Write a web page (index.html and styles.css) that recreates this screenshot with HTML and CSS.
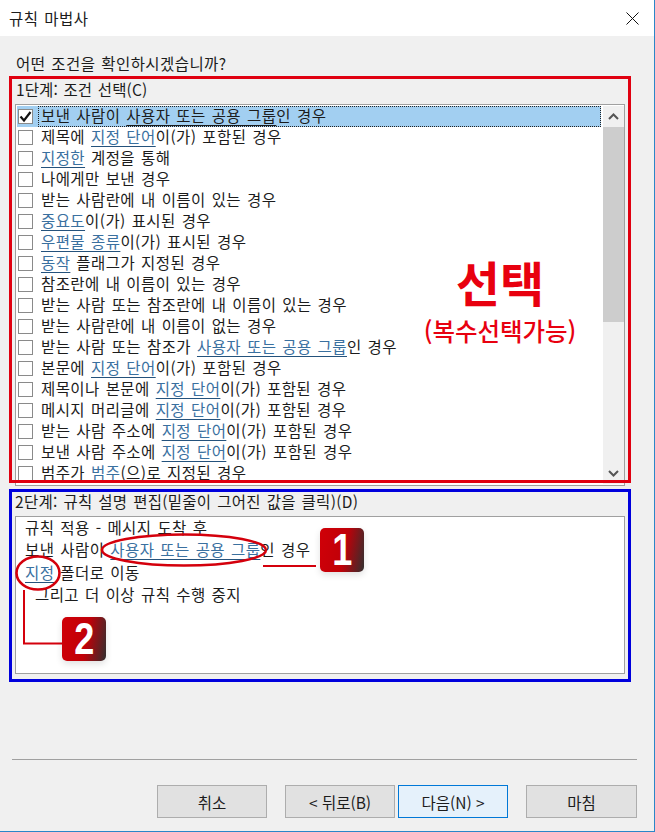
FILE: index.html
```html
<!DOCTYPE html>
<html lang="ko">
<head>
<meta charset="utf-8">
<title>규칙 마법사</title>
<link rel="stylesheet" href="styles.css">
</head>
<body>
<div class="window">
  <header class="titlebar">
    <span class="title">규칙 마법사</span>
    <svg class="close" width="13" height="13" viewBox="0 0 13 13"><path d="M.5 .5L12.500 12.500M12.500 .5L.5 12.500" stroke="#111" stroke-width="1" fill="none"/></svg>
  </header>
  <main class="content">
    <p class="question">어떤 조건을 확인하시겠습니까?</p>
    <h2 class="step step-one">1단계: 조건 선택(C)</h2>
    <div class="listbox">
      <ul class="rows">
        <li class="row selected"><span class="check checked"><svg width="13" height="13" viewBox="0 0 13 13"><path d="M1.5 6.5L5 10.5L11.5 2" stroke="#111" stroke-width="2.2" fill="none"/></svg></span><span class="label">보낸 사람이 <u>사용자 또는 공용 그룹</u>인 경우</span></li>
        <li class="row"><span class="check"></span><span class="label">제목에 <a>지정 단어</a>이(가) 포함된 경우</span></li>
        <li class="row"><span class="check"></span><span class="label"><a>지정한</a> 계정을 통해</span></li>
        <li class="row"><span class="check"></span><span class="label">나에게만 보낸 경우</span></li>
        <li class="row"><span class="check"></span><span class="label">받는 사람란에 내 이름이 있는 경우</span></li>
        <li class="row"><span class="check"></span><span class="label"><a>중요도</a>이(가) 표시된 경우</span></li>
        <li class="row"><span class="check"></span><span class="label"><a>우편물 종류</a>이(가) 표시된 경우</span></li>
        <li class="row"><span class="check"></span><span class="label"><a>동작</a> 플래그가 지정된 경우</span></li>
        <li class="row"><span class="check"></span><span class="label">참조란에 내 이름이 있는 경우</span></li>
        <li class="row"><span class="check"></span><span class="label">받는 사람 또는 참조란에 내 이름이 있는 경우</span></li>
        <li class="row"><span class="check"></span><span class="label">받는 사람란에 내 이름이 없는 경우</span></li>
        <li class="row"><span class="check"></span><span class="label">받는 사람 또는 참조가 <a>사용자 또는 공용 그룹</a>인 경우</span></li>
        <li class="row"><span class="check"></span><span class="label">본문에 <a>지정 단어</a>이(가) 포함된 경우</span></li>
        <li class="row"><span class="check"></span><span class="label">제목이나 본문에 <a>지정 단어</a>이(가) 포함된 경우</span></li>
        <li class="row"><span class="check"></span><span class="label">메시지 머리글에 <a>지정 단어</a>이(가) 포함된 경우</span></li>
        <li class="row"><span class="check"></span><span class="label">받는 사람 주소에 <a>지정 단어</a>이(가) 포함된 경우</span></li>
        <li class="row"><span class="check"></span><span class="label">보낸 사람 주소에 <a>지정 단어</a>이(가) 포함된 경우</span></li>
        <li class="row"><span class="check"></span><span class="label">범주가 <a>범주</a>(으)로 지정된 경우</span></li>
      </ul>
      <div class="scrollbar">
        <div class="arrow"><svg width="11" height="7" viewBox="0 0 11 7"><path d="M1 6L5.5 1.5L10 6" stroke="#555" stroke-width="2" fill="none"/></svg></div>
        <div class="thumb"></div>
        <div class="track"></div>
        <div class="arrow"><svg width="11" height="7" viewBox="0 0 11 7"><path d="M1 1L5.5 5.5L10 1" stroke="#555" stroke-width="2" fill="none"/></svg></div>
      </div>
    </div>
    <h2 class="step step-two">2단계: 규칙 설명 편집(밑줄이 그어진 값을 클릭)(D)</h2>
    <div class="description">
      <p>규칙 적용 - 메시지 도착 후</p>
      <p>보낸 사람이 <a>사용자 또는 공용 그룹</a>인 경우</p>
      <p><a>지정</a> 폴더로 이동</p>
      <p class="indent">그리고 더 이상 규칙 수행 중지</p>
    </div>
    <hr class="divider">
    <footer class="buttons">
      <button class="btn cancel">취소</button>
      <button class="btn back">&lt; 뒤로(B)</button>
      <button class="btn next">다음(N) &gt;</button>
      <button class="btn finish">마침</button>
    </footer>
  </main>

  <svg class="marks" width="655" height="832" viewBox="0 0 655 832">
    <rect x="10.5" y="77.5" width="619" height="404" fill="none" stroke="#e00010" stroke-width="3"/>
    <rect x="10.5" y="490.5" width="619" height="190" fill="none" stroke="#0000dd" stroke-width="3"/>
    <ellipse cx="184" cy="550" rx="82" ry="15.5" fill="none" stroke="#d4000c" stroke-width="2.600"/>
    <ellipse cx="38" cy="573" rx="21.5" ry="16.5" fill="none" stroke="#d4000c" stroke-width="2.600"/>
    <path d="M263 566H316M24 590V643.500H64" fill="none" stroke="#d4000c" stroke-width="2"/>
  </svg>
  <div class="badge badge-one"><span class="digit">1</span></div>
  <div class="badge badge-two"><span class="digit">2</span></div>
  <div class="callout">
    <div class="callout-main">선택</div>
    <div class="callout-sub">(복수선택가능)</div>
  </div>
</div>
</body>
</html>
```

FILE: styles.css
```css
* { box-sizing: border-box; }
html, body { margin: 0; padding: 0; }
body {
  font-family: "Noto Sans CJK KR", "Noto Sans", sans-serif;
  font-size: 15.5px;
  letter-spacing: .42px;
  word-spacing: 1.2px;
  color: #1c1c1c;
}
.window {
  position: relative;
  width: 655px;
  height: 832px;
  overflow: hidden;
  display: flex;
  flex-direction: column;
  background: #f0f0f0;
  border-right: 1px solid #2b86c8;
  border-bottom: 1px solid #2b86c8;
}
.titlebar {
  height: 36px;
  flex: none;
  background: #fff;
  display: flex;
  align-items: center;
  justify-content: space-between;
  padding: 0 15px 0 9px;
}
.title { line-height: 36px; }
.close { display: block; }
.content {
  flex: 1;
  display: flex;
  flex-direction: column;
  padding: 0 29px 0 15px;
}
.question {
  margin: 16px 0 0 1px;
  height: 22px;
  line-height: 22px;
}
.step {
  margin: 0 0 0 1px;
  font: inherit;
  height: 22px;
  line-height: 22px;
  letter-spacing: .28px;
}
.step-one { margin-top: 5px; line-height: 20px; letter-spacing: .1px; }
.step-two { margin-top: 3px; margin-left: 0; height: 27px; line-height: 24px; }
.listbox {
  height: 382px;
  flex: none;
  display: flex;
  margin-top: 3px;
  border: 1px solid #a0a0a0;
  padding: 1px 0 1px 1px;
  background: #fff;
  overflow: hidden;
}
.rows {
  list-style: none;
  margin: 0;
  padding: 0;
  flex: 1;
  min-width: 0;
}
.row {
  height: 21px;
  display: flex;
  align-items: center;
  white-space: nowrap;
  padding-left: 1px;
}
.row.selected { background: #a2cff1; }
.check {
  width: 15px;
  height: 15px;
  flex: none;
  border: 1px solid #8a8a8a;
  background: #fff;
  display: flex;
  align-items: center;
  justify-content: center;
}
.label {
  flex: 1;
  margin-left: 5px;
  padding-left: 3px;
  line-height: 19px;
  height: 21px;
}
.selected .label { outline: 1px dotted #222; outline-offset: -1px; }
a, u { text-underline-offset: 3px; text-decoration-thickness: 1px; }
a { color: #3a709f; text-decoration: underline; text-decoration-color: #24527c; }
u { color: #1c1c1c; text-decoration-color: #1c1c1c; }
.scrollbar {
  width: 21px;
  flex: none;
  margin-left: 2px;
  display: flex;
  flex-direction: column;
  background: #f0f0f0;
}
.arrow {
  height: 21px;
  flex: none;
  display: flex;
  align-items: center;
  justify-content: center;
}
.thumb { height: 195px; flex: none; background: #cdcdcd; }
.track { flex: 1; }
.description {
  height: 158px;
  flex: none;
  border: 1px solid #a0a0a0;
  background: #fff;
  padding: 0 0 0 9px;
}
.description p { margin: 0; height: 22.300px; line-height: 20px; white-space: nowrap; }
.description .indent { padding-left: 10px; }
.divider {
  margin: 85px -12px 0 -3px;
  border: 0;
  height: 1px;
  background: #a0a0a0;
}
.buttons {
  display: flex;
  margin: 25px -12px 0 0;
  padding-left: 142px;
}
.btn {
  height: 33px;
  width: 110px;
  font: inherit;
  color: #1c1c1c;
  background: #e1e1e1;
  border: 1px solid #adadad;
  padding: 0;
  flex: none;
}
.back { margin-left: 18px; }
.next { margin-left: 3px; background: #e5f1fb; border-color: #0078d7; }
.finish { margin-left: 18px; width: 111px; }
.marks { position: absolute; left: 0; top: 0; pointer-events: none; }
.badge {
  position: absolute;
  width: 44px;
  height: 44px;
  border-radius: 5px;
  background: linear-gradient(100deg, #d00008 0%, #c00008 55%, #303030 100%);
  box-shadow: 0 3px 7px rgba(0,0,0,.12);
  color: #fff;
  font-family: "Liberation Sans", sans-serif;
  font-weight: 700;
  font-size: 44px;
  letter-spacing: 0;
  line-height: 44px;
  text-align: center;
}
.digit { display: inline-block; transform: scaleX(.82); }
.badge-one { left: 320px; top: 528px; }
.badge-two { left: 62px; top: 617px; }
.callout {
  position: absolute;
  left: 400px;
  top: 250px;
  width: 200px;
  text-align: center;
  color: #e8000f;
  font-weight: 700;
  letter-spacing: 0;
  word-spacing: 0;
}
.callout-main { font-size: 48px; line-height: 62px; }
.callout-sub { font-size: 24.500px; line-height: 38px; font-weight: 500; }
```
